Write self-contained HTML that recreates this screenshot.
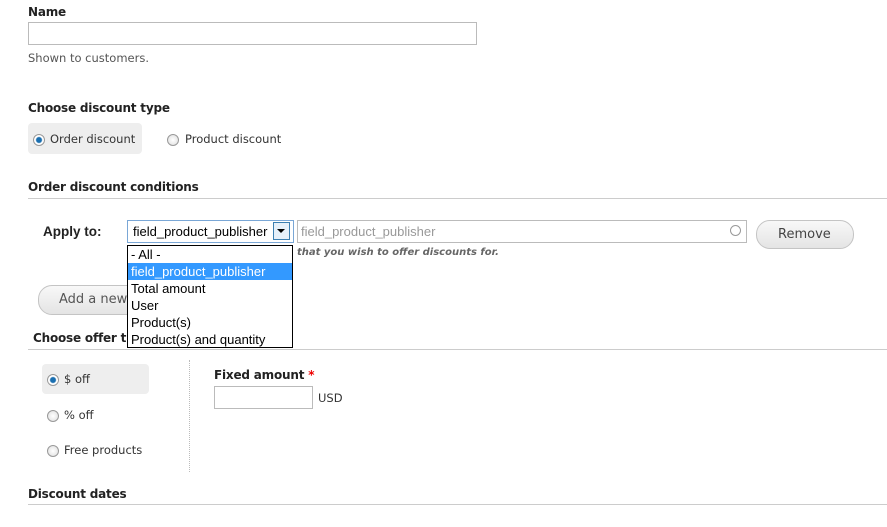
<!DOCTYPE html>
<html><head><style>
body{margin:0;width:887px;height:527px;background:#fff;position:relative;overflow:hidden;font-family:"DejaVu Sans","Liberation Sans",sans-serif;color:#333;}
.a{position:absolute;white-space:nowrap}
.h{font-weight:bold;font-size:12px;color:#222;letter-spacing:-0.2px}
.t{font-size:11.5px}
.hr{position:absolute;height:1px;background:#ccc}
.radio{position:absolute;width:10px;height:10px;border:1px solid #999;border-radius:50%;background:radial-gradient(#fff,#ddd)}
.radio.on{background:radial-gradient(circle,#1a6fb0 0,#1a6fb0 2.5px,#fff 3.5px)}
.box{position:absolute;border:1px solid #bbb;background:#fff}
.ar{font-family:"Liberation Sans",Arial,sans-serif;font-size:13px}
</style></head><body>
<div class="a h" style="left:28px;top:5px">Name</div>
<div class="box" style="left:28px;top:22px;width:447px;height:21px"></div>
<div class="a t" style="left:28px;top:51px;color:#555">Shown to customers.</div>

<div class="a h" style="left:28px;top:101px">Choose discount type</div>
<div class="a" style="left:28px;top:123px;width:114px;height:31px;background:#eee;border-radius:4px"></div>
<div class="radio on" style="left:33px;top:134px"></div>
<div class="a t" style="left:50px;top:132px">Order discount</div>
<div class="radio" style="left:167px;top:134px"></div>
<div class="a t" style="left:185px;top:132px">Product discount</div>

<div class="a h" style="left:28px;top:180px">Order discount conditions</div>
<div class="hr" style="left:28px;top:198px;width:859px"></div>

<div class="a" style="left:43px;top:224px;font-family:'Liberation Sans',Arial,sans-serif;font-weight:bold;font-size:13.5px;color:#222">Apply to:</div>
<div class="box" style="left:127px;top:220px;width:165px;height:21px;border-color:#7aa7d6"></div>
<div class="a ar" style="left:133px;top:224px;color:#000">field_product_publisher</div>
<div class="a" style="left:273px;top:222px;width:15px;height:16px;border:1px solid #3c7fb1;background:#e6f0fa"></div>
<div class="a" style="left:277px;top:229px;width:0;height:0;border-left:4px solid transparent;border-right:4px solid transparent;border-top:4px solid #000"></div>
<div class="box" style="left:297px;top:220px;width:448px;height:21px"></div>
<div class="a ar" style="left:301px;top:224px;color:#999">field_product_publisher</div>
<div class="a" style="left:730px;top:225px;width:9px;height:9px;border:1px solid #999;border-radius:50%"></div>
<div class="a" style="left:756px;top:220px;width:96px;height:27px;border:1px solid #c4c4c4;border-radius:14px;background:linear-gradient(#f8f8f8,#e4e4e4)"></div>
<div class="a" style="left:778px;top:227px;font-size:13px;color:#444">Remove</div>
<div class="a" style="left:297px;top:247px;font-size:10px;font-style:italic;font-weight:bold;color:#666">that you wish to offer discounts for.</div>

<div class="a" style="left:38px;top:285px;width:120px;height:28px;border:1px solid #c4c4c4;border-radius:14px;background:linear-gradient(#f8f8f8,#e4e4e4)"></div>
<div class="a" style="left:59px;top:292px;font-size:13px;color:#555">Add a new</div>

<div class="a h" style="left:33px;top:331px">Choose offer t</div>
<div class="hr" style="left:28px;top:349px;width:859px"></div>

<div class="a ar" style="left:127px;top:245px;width:164px;height:101px;border:1px solid #000;background:#fff;color:#000;line-height:17px">
<div style="padding-left:3px">- All -</div>
<div style="padding-left:3px;background:#3399ff;color:#fff">field_product_publisher</div>
<div style="padding-left:3px">Total amount</div>
<div style="padding-left:3px">User</div>
<div style="padding-left:3px">Product(s)</div>
<div style="padding-left:3px">Product(s) and quantity</div>
</div>

<div class="a" style="left:42px;top:364px;width:107px;height:30px;background:#eee;border-radius:4px"></div>
<div class="radio on" style="left:47px;top:374px"></div>
<div class="a t" style="left:64px;top:372px">$ off</div>
<div class="radio" style="left:47px;top:410px"></div>
<div class="a t" style="left:64px;top:408px">% off</div>
<div class="radio" style="left:47px;top:445px"></div>
<div class="a t" style="left:64px;top:443px">Free products</div>
<div class="a" style="left:189px;top:360px;height:112px;border-left:1px dotted #bbb"></div>

<div class="a h" style="left:214px;top:368px">Fixed amount <span style="color:#e00">*</span></div>
<div class="box" style="left:214px;top:386px;width:97px;height:21px"></div>
<div class="a t" style="left:318px;top:391px">USD</div>

<div class="a h" style="left:28px;top:487px">Discount dates</div>
<div class="hr" style="left:28px;top:504px;width:859px"></div>
</body></html>
